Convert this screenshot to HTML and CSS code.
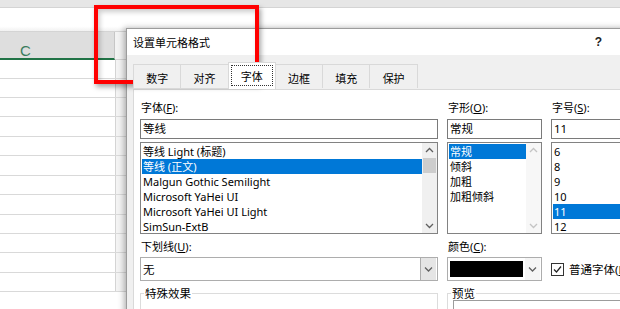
FILE: index.html
```html
<!DOCTYPE html>
<html>
<head>
  <title>设置单元格格式</title>
  <link rel="stylesheet" href="styles.css">
</head>
<body>
  <div class="sheet">
    <div class="ribbon"></div>
    <div class="formula-bar"></div>
    <div class="col-header">
      <div class="col-c">C</div>
      <div class="col-d"></div>
    </div>
    <div class="rows">
      <div class="row"><div class="cell-c"></div><div class="cell-d"></div></div>
      <div class="row"><div class="cell-c"></div><div class="cell-d"></div></div>
      <div class="row"><div class="cell-c"></div><div class="cell-d"></div></div>
      <div class="row"><div class="cell-c"></div><div class="cell-d"></div></div>
      <div class="row"><div class="cell-c"></div><div class="cell-d"></div></div>
      <div class="row"><div class="cell-c"></div><div class="cell-d"></div></div>
      <div class="row"><div class="cell-c"></div><div class="cell-d"></div></div>
      <div class="row"><div class="cell-c"></div><div class="cell-d"></div></div>
      <div class="row"><div class="cell-c"></div><div class="cell-d"></div></div>
      <div class="row"><div class="cell-c"></div><div class="cell-d"></div></div>
      <div class="row"><div class="cell-c"></div><div class="cell-d"></div></div>
      <div class="row"><div class="cell-c"></div><div class="cell-d"></div></div>
    </div>
  </div>

  <div class="dialog">
    <div class="titlebar">
      <span class="title">设置单元格格式</span>
      <span class="help">?</span>
    </div>

    <div class="tabs">
      <div class="tab">数字</div>
      <div class="tab">对齐</div>
      <div class="tab active"><span class="focus">字体</span></div>
      <div class="tab">边框</div>
      <div class="tab">填充</div>
      <div class="tab">保护</div>
    </div>

    <div class="panel">
      <div class="grid top-grid">
        <div class="field">
          <label>字体(<u>F</u>):</label>
          <div class="textbox">等线</div>
          <div class="listbox font-list">
            <div class="items">
              <div class="item">等线 Light (标题)</div>
              <div class="item selected">等线 (正文)</div>
              <div class="item">Malgun Gothic Semilight</div>
              <div class="item">Microsoft YaHei UI</div>
              <div class="item">Microsoft YaHei UI Light</div>
              <div class="item">SimSun-ExtB</div>
            </div>
            <div class="scrollbar">
              <svg class="arrow" width="15" height="15" viewBox="0 0 15 15"><polyline points="4,9 7.5,5.5 11,9" fill="none" stroke="#606060" stroke-width="1.3"/></svg>
              <div class="track"><div class="thumb"></div></div>
              <svg class="arrow" width="15" height="15" viewBox="0 0 15 15"><polyline points="4,6 7.5,9.5 11,6" fill="none" stroke="#606060" stroke-width="1.3"/></svg>
            </div>
          </div>
        </div>

        <div class="field">
          <label>字形(<u>O</u>):</label>
          <div class="textbox">常规</div>
          <div class="listbox style-list">
            <div class="items">
              <div class="item selected">常规</div>
              <div class="item">倾斜</div>
              <div class="item">加粗</div>
              <div class="item">加粗倾斜</div>
            </div>
            <div class="scrollbar disabled">
              <svg class="arrow" width="15" height="15" viewBox="0 0 15 15"><polyline points="4,9 7.5,5.5 11,9" fill="none" stroke="#c4c4c4" stroke-width="1.3"/></svg>
              <div class="track"></div>
              <svg class="arrow" width="15" height="15" viewBox="0 0 15 15"><polyline points="4,6 7.5,9.5 11,6" fill="none" stroke="#c4c4c4" stroke-width="1.3"/></svg>
            </div>
          </div>
        </div>

        <div class="field">
          <label>字号(<u>S</u>):</label>
          <div class="textbox">11</div>
          <div class="listbox size-list">
            <div class="items">
              <div class="item">6</div>
              <div class="item">8</div>
              <div class="item">9</div>
              <div class="item">10</div>
              <div class="item selected">11</div>
              <div class="item">12</div>
            </div>
          </div>
        </div>
      </div>

      <div class="grid mid-grid">
        <div class="field">
          <label>下划线(<u>U</u>):</label>
          <div class="combo">
            <span class="combo-value">无</span>
            <span class="combo-btn">
              <svg width="15" height="22" viewBox="0 0 15 22"><polyline points="4,9.5 7.5,13 11,9.5" fill="none" stroke="#606060" stroke-width="1.3"/></svg>
            </span>
          </div>
        </div>

        <div class="field">
          <label>颜色(<u>C</u>):</label>
          <div class="combo color-combo">
            <span class="swatch"></span>
            <span class="combo-btn light">
              <svg width="15" height="22" viewBox="0 0 15 22"><polyline points="4,9.5 7.5,13 11,9.5" fill="none" stroke="#606060" stroke-width="1.3"/></svg>
            </span>
          </div>
        </div>

        <div class="field check-field">
          <div class="check-row">
            <span class="checkbox">
              <svg width="11" height="11" viewBox="0 0 11 11"><polyline points="2,5.5 4.5,8 9,2.5" fill="none" stroke="#222" stroke-width="1.2"/></svg>
            </span>
            <span>普通字体(<u>N</u>)</span>
          </div>
        </div>
      </div>

      <div class="grid bottom-grid">
        <fieldset class="group">
          <legend>特殊效果</legend>
        </fieldset>
        <fieldset class="group preview">
          <legend>预览</legend>
          <div class="preview-box"></div>
        </fieldset>
      </div>
    </div>
  </div>

  <div class="marker"></div>
</body>
</html>
```

FILE: styles.css
```css
body {
  margin: 0;
  width: 620px;
  height: 309px;
  overflow: hidden;
  position: relative;
  background-color: #fff;
  font-family: "Noto Sans", "Noto Sans CJK SC", sans-serif;
  font-size: 11px;
  color: #000;
}

/* spreadsheet behind the dialog */

.ribbon {
  height: 7px;
  background-color: #e6e6e6;
  border-bottom: 1px solid #d4d4d4;
}

.formula-bar {
  height: 23px;
  background: linear-gradient(#fff 80%, #f1f1f1);
  border-bottom: 1px solid #d4d4d4;
}

.col-header {
  display: flex;
  height: 28px;
}

.col-c {
  width: 115px;
  box-sizing: border-box;
  background-color: #dedede;
  border-right: 1px solid #c6c6c6;
  border-bottom: 2px solid #217346;
  color: #3a7d5c;
  font-family: "Liberation Sans", sans-serif;
  font-size: 15px;
  line-height: 15px;
  display: flex;
  align-items: flex-end;
  padding: 0 0 0 20px;
}

.col-d {
  flex: 1;
  background-color: #f3f3f3;
  border-bottom: 1px solid #d4d4d4;
}

.row {
  display: flex;
  height: 19.45px;
  box-sizing: border-box;
  border-bottom: 1px solid #d9d9d9;
}

.row:first-child {
  height: 18.5px;
}

.cell-c {
  width: 115px;
  border-right: 1px solid #d4d4d4;
}

.cell-d {
  flex: 1;
  background-color: #f4f4f4;
}

/* dialog */

.dialog {
  position: absolute;
  left: 126px;
  top: 28px;
  width: 520px;
  height: 300px;
  background-color: #f0f0f0;
  border: 1px solid #9c9c9c;
  box-shadow: -2px 0 6px rgba(0, 0, 0, 0.3);
}

.titlebar {
  height: 26px;
  background-color: #fff;
  display: flex;
  align-items: center;
  justify-content: space-between;
  padding: 0 45px 0 6px;
}

.help {
  font-family: "Liberation Sans", sans-serif;
  font-size: 12px;
  font-weight: bold;
  color: #222;
}

.tabs {
  display: flex;
  padding: 9px 0 0 6px;
  position: relative;
  z-index: 1;
}

.tab {
  width: 48.3px;
  height: 24px;
  box-sizing: border-box;
  margin-right: -1px;
  border: 1px solid #d9d9d9;
  border-bottom: none;
  background-color: #f0f0f0;
  display: flex;
  align-items: center;
  justify-content: center;
  padding-top: 2px;
}

.tab.active {
  background-color: #fff;
  height: 27px;
  margin-top: -2px;
  padding: 2px 2px 3px;
  position: relative;
  z-index: 2;
}

.focus {
  flex: 1;
  align-self: stretch;
  display: flex;
  align-items: center;
  justify-content: center;
  border: 1px dotted #333;
}

.panel {
  margin-left: 6px;
  height: 230px;
  background-color: #fff;
  border: 1px solid #d9d9d9;
  padding: 10px 0 0 6px;
}

.grid {
  display: grid;
  grid-template-columns: 298px 95px 120px;
  column-gap: 9px;
}

label {
  display: block;
  height: 15px;
  line-height: 15px;
  padding-left: 1px;
}

.textbox {
  margin-top: 4px;
  height: 20px;
  box-sizing: border-box;
  border: 1px solid #7a7a7a;
  padding-left: 2px;
  line-height: 18px;
  font-size: 11.5px;
}

.listbox {
  margin-top: 3px;
  height: 92px;
  box-sizing: border-box;
  border: 1px solid #828282;
  display: flex;
  padding: 1px;
}

.items {
  flex: 1;
}

.item {
  height: 15px;
  line-height: 15px;
  padding-left: 1px;
  font-size: 11px;
  white-space: nowrap;
}

.item.selected {
  background-color: #0078d7;
  color: #fff;
}

.scrollbar {
  width: 15px;
  margin: -1px -1px -1px 0;
  background-color: #f0f0f0;
  display: flex;
  flex-direction: column;
}

.scrollbar.disabled {
  background-color: #f7f7f7;
}

.arrow {
  display: block;
}

.track {
  flex: 1;
}

.thumb {
  margin: 0 1px;
  height: 15px;
  background-color: #cdcdcd;
}

.mid-grid {
  margin-top: 5px;
}

.combo {
  margin-top: 3px;
  height: 24px;
  box-sizing: border-box;
  border: 1px solid #adadad;
  display: flex;
  align-items: center;
  font-size: 11.5px;
}

.combo-value {
  flex: 1;
  padding-left: 2px;
}

.combo-btn {
  width: 15px;
  align-self: stretch;
  margin: 0 1px 0 0;
  background-color: #e5e5e5;
  border-left: 1px solid #adadad;
}

.combo-btn.light {
  background-color: #f5f5f5;
  border-left: none;
}

.combo-btn svg {
  display: block;
}

.color-combo {
  padding-left: 2px;
}

.swatch {
  flex: 1;
  height: 16px;
  margin-right: 2px;
  background-color: #000;
}

.check-field {
  display: flex;
  align-items: flex-end;
}

.check-row {
  height: 24px;
  display: flex;
  align-items: center;
  gap: 5px;
  white-space: nowrap;
  font-size: 11.5px;
}

.checkbox {
  width: 11px;
  height: 11px;
  border: 1px solid #333;
  background-color: #fff;
  display: flex;
}

.bottom-grid {
  margin-top: 6px;
  grid-template-columns: 298px 200px;
}

.group {
  margin: 0;
  padding: 0;
  height: 60px;
  border: 1px solid #dcdcdc;
  min-width: 0;
}

.group legend {
  padding: 0 1px;
  margin-left: 3px;
  font-size: 11.5px;
  line-height: 13px;
}

.preview-box {
  margin: 0 0 0 5px;
  height: 40px;
  border: 1px solid #9c9c9c;
}

/* red annotation frame */

.marker {
  position: absolute;
  left: 94px;
  top: 5px;
  width: 165px;
  height: 79px;
  box-sizing: border-box;
  border: 4px solid #ff0000;
  box-shadow: 2px 3px 5px rgba(0, 0, 0, 0.35), inset 2px 3px 5px rgba(0, 0, 0, 0.2);
}
```
